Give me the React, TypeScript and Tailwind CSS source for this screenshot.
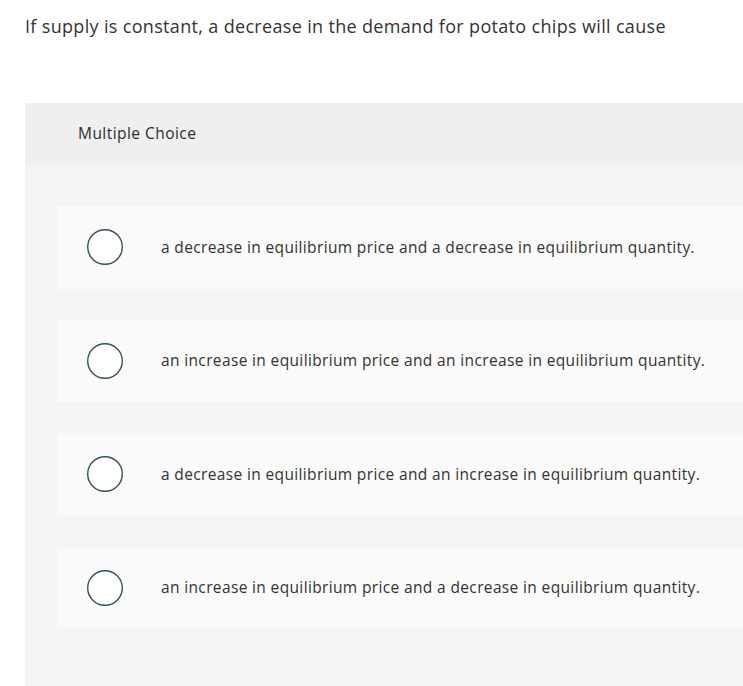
import React from 'react';

const options = [
  'a decrease in equilibrium price and a decrease in equilibrium quantity.',
  'an increase in equilibrium price and an increase in equilibrium quantity.',
  'a decrease in equilibrium price and an increase in equilibrium quantity.',
  'an increase in equilibrium price and a decrease in equilibrium quantity.',
];

const Radio = () => (
  <svg width="38" height="38" viewBox="0 0 38 38" className="shrink-0">
    <circle cx="19" cy="19" r="17.3" fill="#ffffff" stroke="#34505f" strokeWidth="1.4" />
  </svg>
);

export default function App() {
  return (
    <div className="w-[743px] h-[686px] overflow-hidden bg-white font-['Open_Sans',sans-serif] text-[#333]">
      <p className="pl-[25px] pt-[13px] text-[18px] leading-[26px] tracking-[0.33px]">
        If supply is constant, a decrease in the demand for potato chips will cause
      </p>

      <div className="ml-[25px] mt-[64px] w-[760px]">
        <div className="h-[62px] bg-[#efefef] pl-[53px] flex items-center text-[15.5px] tracking-[0.45px] text-[#2d2d2d]">
          Multiple Choice
        </div>
        <div className="bg-[#f4f4f4] pl-[32px] pt-[41px] pb-[60px] flex flex-col gap-[31px]">
          {options.map((text) => (
            <div key={text} className="h-[82.5px] bg-[#fafafa] flex items-center pl-[29px]">
              <Radio />
              <span className="ml-[37px] text-[15.5px] tracking-[0.36px] text-[#333]">{text}</span>
            </div>
          ))}
        </div>
      </div>
    </div>
  );
}
